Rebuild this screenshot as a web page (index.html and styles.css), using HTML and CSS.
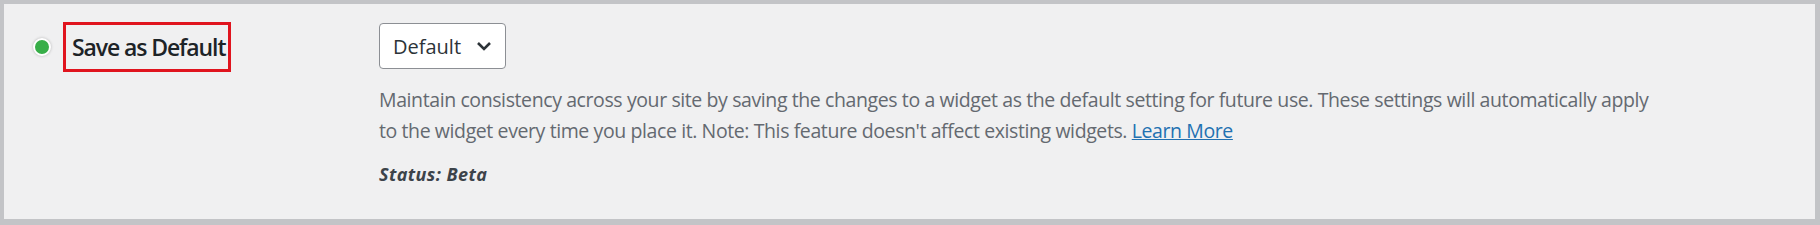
FILE: index.html
```html
<!DOCTYPE html>
<html lang="en">
<head>
  <meta charset="UTF-8">
  <title>Save as Default</title>
  <link rel="stylesheet" href="styles.css">
</head>
<body>
  <div class="panel">
    <div class="setting-row">
      <div class="setting-label">
        <span class="status-dot"></span>
        <div class="label-box">Save as Default</div>
      </div>
      <div class="setting-field">
        <div class="select-box">
          <span>Default</span>
          <svg class="chevron" width="16" height="10" viewBox="0 0 16 10">
            <path d="M2 2l6 6 6-6" fill="none" stroke="#2c3338" stroke-width="2.6"/>
          </svg>
        </div>
        <p class="description">Maintain consistency across your site by saving the changes to a widget as the default setting for future use. These settings will automatically apply<br>to the widget every time you place it. Note: This feature doesn't affect existing widgets. <a href="#">Learn More</a></p>
        <p class="status">Status: Beta</p>
      </div>
    </div>
  </div>
</body>
</html>
```

FILE: styles.css
```css
body {
  margin: 0;
  background-color: #c3c4c7;
  font-family: "Open Sans", "Noto Sans", sans-serif;
}
.panel {
  background-color: #f0f0f1;
  margin: 4px 5px 0 4px;
  height: 215px;
  box-sizing: border-box;
  padding: 18px 0 0 29px;
}
.setting-row {
  display: flex;
}
.setting-label {
  display: flex;
  align-items: center;
  gap: 12px;
  width: 346px;
  height: 50px;
}
.status-dot {
  width: 14px;
  height: 14px;
  border-radius: 50%;
  background-color: #37ae48;
  border: 2px solid #fff;
  box-shadow: 0 0 3px rgba(0, 0, 0, 0.25);
}
.label-box {
  border: 3px solid #e0141e;
  height: 50px;
  box-sizing: border-box;
  display: flex;
  align-items: center;
  padding: 0 6px;
  width: 168px;
  font-size: 23px;
  font-weight: 600;
  letter-spacing: -1.1px;
  color: #1d2327;
  white-space: nowrap;
}
.setting-field {
  padding-top: 1px;
}
.select-box {
  display: inline-flex;
  align-items: center;
  justify-content: space-between;
  width: 127px;
  height: 46px;
  box-sizing: border-box;
  padding: 0 13px;
  border: 1px solid #8c8f94;
  border-radius: 4px;
  background-color: #fff;
  font-size: 20px;
  color: #2c3338;
}
.description {
  margin: 15px 0 0;
  font-size: 19.5px;
  letter-spacing: -0.4px;
  line-height: 31px;
  color: #646970;
}
.description a {
  color: #2271b1;
}
.status {
  margin: 16px 0 0;
  font-size: 18px;
  letter-spacing: 0.4px;
  line-height: 24px;
  font-weight: 700;
  font-style: italic;
  color: #3c434a;
}
```
